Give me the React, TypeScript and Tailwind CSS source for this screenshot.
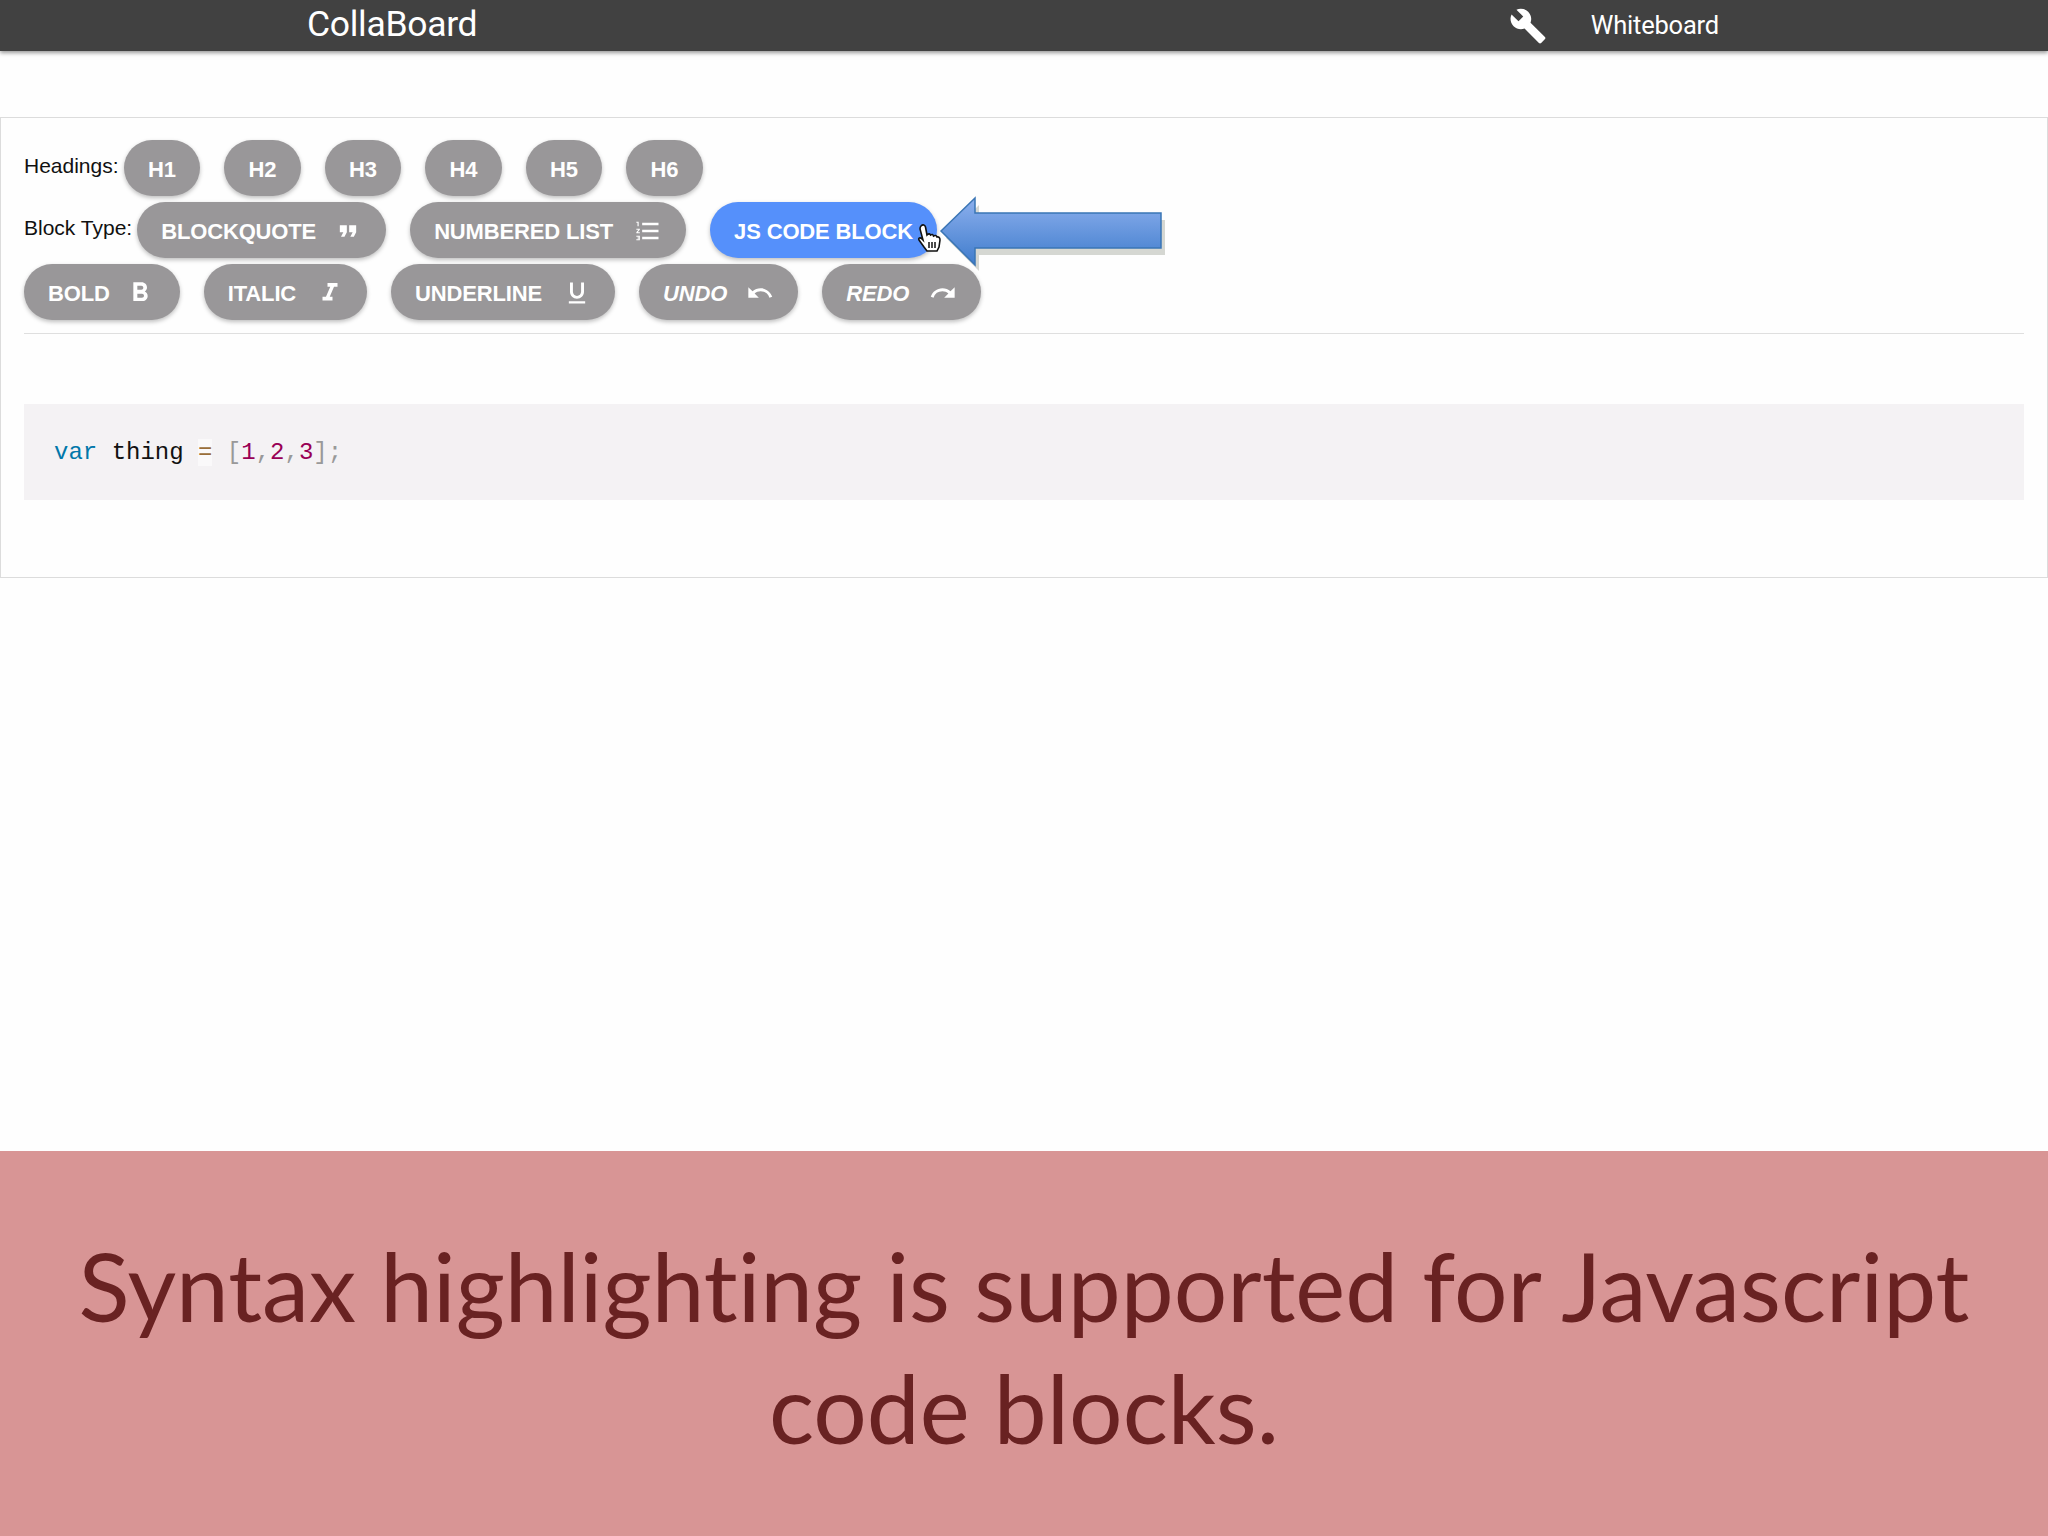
import type { ReactNode } from 'react'
import {
  MdBuild,
  MdFormatBold,
  MdFormatItalic,
  MdFormatListNumbered,
  MdFormatQuote,
  MdFormatUnderlined,
  MdRedo,
  MdUndo,
} from 'react-icons/md'

const headings = ['H1', 'H2', 'H3', 'H4', 'H5', 'H6']

const Pill = ({
  label,
  icon,
  active,
  italic,
}: {
  label: string
  icon?: ReactNode
  active?: boolean
  italic?: boolean
}) => (
  <button
    className={`flex h-14 items-center justify-center gap-5 rounded-[28px] px-6 pt-[2px] text-[22px] font-bold tracking-[-0.15px] text-white shadow-[0_2px_4px_rgba(0,0,0,0.25)] ${
      active ? 'bg-[#5590fb]' : 'bg-[#999799]'
    } ${italic ? 'italic' : ''}`}
  >
    <span>{label}</span>
    {icon}
  </button>
)

const Arrow = () => (
  <svg className="absolute left-[936px] top-[194px]" width="232" height="78" viewBox="0 0 232 78">
    <defs>
      <linearGradient id="arrowFill" x1="0" y1="0" x2="0" y2="1">
        <stop offset="0" stopColor="#8db0ee" />
        <stop offset="1" stopColor="#3f7ccc" />
      </linearGradient>
    </defs>
    <path d="M8 40 L41 7 V22 H227 V57 H41 V73 Z" fill="#8a8f80" opacity="0.35" transform="translate(2 4)" />
    <path d="M5 37 L39 4 V19 H225 V54 H39 V71 Z" fill="url(#arrowFill)" stroke="#3a75b5" strokeWidth="1.5" />
  </svg>
)

const HandCursor = () => (
  <svg className="absolute left-[917px] top-[224px]" width="24" height="28" viewBox="0 0 24 28">
    <path
      d="M4 2 C6 0 8 1 8.500 3 L10 11 C12 9 13 10 13.500 11 C15 10 16 10.500 16.500 12 C18 11 19.500 11.500 20 13 C21.500 12.500 23 13.500 23 16 L22 23 L20 27 H10 L7 23 L2 16 C1 14 3 13 5 15 L6 16 L3 5 C3 4 3 3 4 2 Z"
      fill="#fff"
      stroke="#111"
      strokeWidth="1.600"
    />
    <path d="M12 18 V24 M15 18 V24 M18 18 V24" stroke="#111" strokeWidth="1.500" />
  </svg>
)

export default function App() {
  return (
    <div className="relative flex h-[1536px] flex-col overflow-hidden bg-[#fefefe] font-['Liberation_Sans',sans-serif]">
      <header className="flex h-[51px] shrink-0 items-center bg-[#414141] text-white shadow-[0_2px_4px_rgba(0,0,0,0.4)]">
        <div className="mb-[2px] ml-[307px] font-['Roboto',sans-serif] text-[35.500px] font-normal tracking-[-0.3px]">CollaBoard</div>
        <MdBuild className="ml-auto h-[38px] w-[38px]" />
        <div className="ml-[44px] mr-[329px] font-['Roboto',sans-serif] text-[25.5px] tracking-[-0.2px]">Whiteboard</div>
      </header>

      <main className="mt-[66px] h-[461px] border border-[#dcdcdc] px-[23px] pt-[22px]">
        <div className="flex h-14 items-center">
          <span className="mb-1 mr-[5px] text-[21px] text-[#111]">Headings:</span>
          <div className="flex gap-6">
            {headings.map(h => (
              <div key={h} className="w-[76.500px] [&>button]:w-full">
                <Pill label={h} />
              </div>
            ))}
          </div>
        </div>
        <div className="mt-[6px] flex h-14 items-center">
          <span className="mb-1 mr-[5px] text-[21px] text-[#111]">Block Type:</span>
          <div className="flex gap-6">
            <Pill label="BLOCKQUOTE" icon={<MdFormatQuote className="-ml-[2px] h-7 w-7" />} />
            <Pill label="NUMBERED LIST" icon={<MdFormatListNumbered className="ml-[1px] h-7 w-7" />} />
            <Pill label="JS CODE BLOCK" active />
          </div>
        </div>
        <div className="mt-[6px] flex gap-6">
          <Pill label="BOLD" icon={<MdFormatBold className="-ml-[6px] h-8 w-8" />} />
          <Pill label="ITALIC" icon={<MdFormatItalic className="-ml-[1px] -mr-[2px] h-[30px] w-[30px]" />} />
          <Pill label="UNDERLINE" icon={<MdFormatUnderlined className="ml-[1px] h-7 w-7" />} />
          <Pill label="UNDO" italic icon={<MdUndo className="-ml-[1px] h-7 w-7" />} />
          <Pill label="REDO" italic icon={<MdRedo className="h-7 w-7" />} />
        </div>
        <div className="mt-[13px] border-t border-[#dfdfdf]" />
        <pre className="mt-[70px] flex h-24 items-center bg-[#f4f2f4] pl-[30px] pt-[2px] font-['DejaVu_Sans_Mono',monospace] text-[24px]">
          <code>
            <span className="text-[#0077aa]">var</span> <span className="text-[#111]">thing</span>{' '}
            <span className="bg-white/50 text-[#9a6e3a]">=</span> <span className="text-[#999]">[</span>
            <span className="text-[#990055]">1</span>
            <span className="text-[#999]">,</span>
            <span className="text-[#990055]">2</span>
            <span className="text-[#999]">,</span>
            <span className="text-[#990055]">3</span>
            <span className="text-[#999]">];</span>
          </code>
        </pre>
      </main>

      <footer className="mt-auto flex h-[385px] items-start justify-center bg-[#d89595] px-[50px] pt-[74px] text-center font-['Lato',sans-serif] text-[94.500px] leading-[122px] text-[#692222] [font-variant-ligatures:none]">
        <p>Syntax highlighting is supported for Javascript code blocks.</p>
      </footer>

      <Arrow />
      <HandCursor />
    </div>
  )
}
